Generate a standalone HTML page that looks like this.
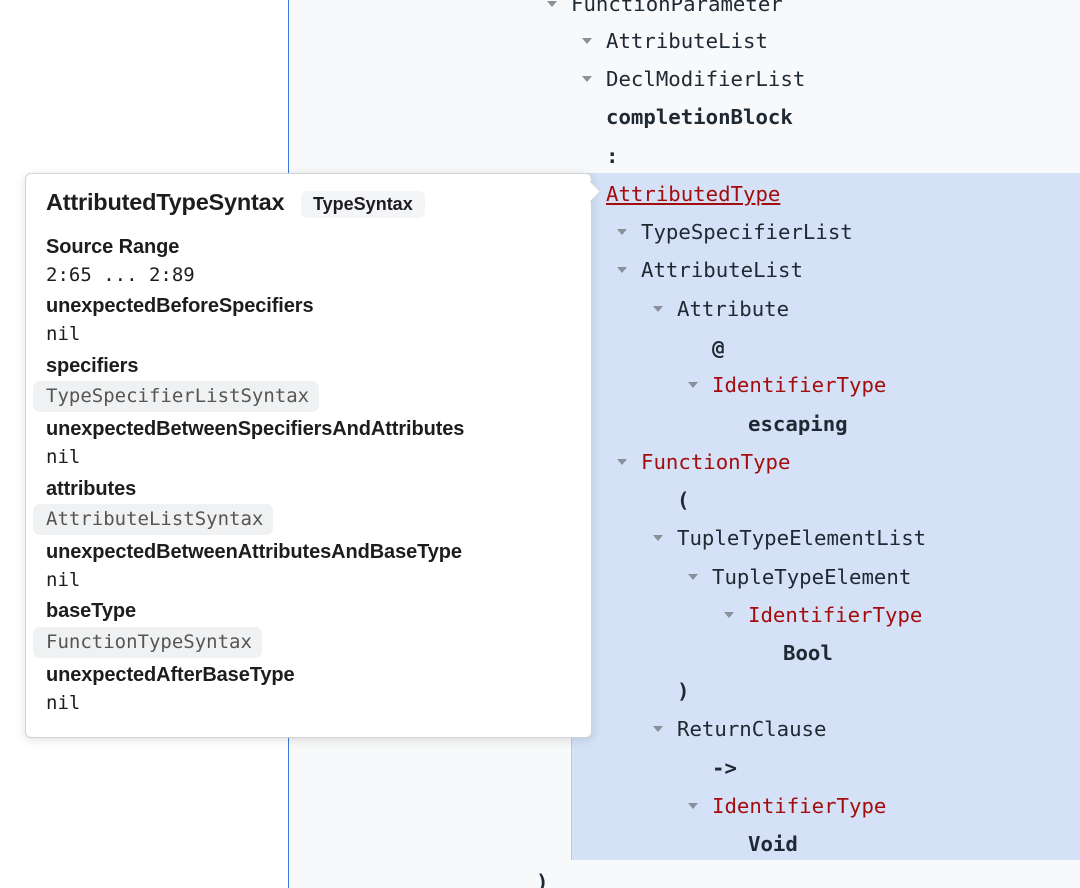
<!DOCTYPE html>
<html><head><meta charset="utf-8"><style>
html,body{margin:0;padding:0;width:1080px;height:888px;overflow:hidden;background:#fff;position:relative;font-family:"Liberation Sans",sans-serif;}
.panel{position:absolute;left:288px;top:0;width:792px;height:888px;background:#f8f9fa;border-left:1.5px solid #3a78d8;}
.hl{position:absolute;left:571px;top:173px;width:509px;height:687px;background:#d4e1f6;border-left:1px solid #b9c9e4;}
.row{position:absolute;font-family:"DejaVu Sans Mono","Liberation Mono",monospace;font-size:20.7px;color:#1f2933;line-height:24px;white-space:nowrap;}
.b{font-weight:bold;}
.r{color:#a30d0d;}
.tri{position:absolute;width:0;height:0;border-left:5px solid transparent;border-right:5px solid transparent;border-top:6px solid #8a9099;}
.pop{position:absolute;left:25px;top:173px;width:565px;height:563px;background:#fff;border:1px solid #cfd2d6;border-radius:6px;box-shadow:0 2px 10px rgba(0,0,0,0.12);}
.arrow{position:absolute;left:583px;top:184px;width:14px;height:14px;background:#fff;transform:rotate(45deg);border-top:1px solid #cfd2d6;border-right:1px solid #cfd2d6;}
.t{position:absolute;color:#1d1d1f;white-space:nowrap;}
.lbl{font-weight:bold;font-size:20px;letter-spacing:-0.1px;}
.val{font-family:"DejaVu Sans Mono","Liberation Mono",monospace;font-size:19px;}
.pill{position:absolute;left:33px;height:31px;background:#f0f1f2;border-radius:7px;font-family:"DejaVu Sans Mono","Liberation Mono",monospace;font-size:19px;color:#555;line-height:31px;padding-left:13px;box-sizing:border-box;}
</style></head><body>
<div class="panel"></div>
<div class="hl"></div>

<div class="tri" style="left:547px;top:1px"></div><div class="row" style="left:571px;top:-8px">FunctionParameter</div>
<div class="tri" style="left:582px;top:38px"></div><div class="row" style="left:606px;top:29px">AttributeList</div>
<div class="tri" style="left:582px;top:76px"></div><div class="row" style="left:606px;top:67px">DeclModifierList</div>
<div class="row b" style="left:606px;top:105px">completionBlock</div>
<div class="row b" style="left:606px;top:144px">:</div>
<div class="row r" style="left:606px;top:182px;text-decoration:underline">AttributedType</div>
<div class="tri" style="left:617px;top:229px"></div><div class="row" style="left:641px;top:220px">TypeSpecifierList</div>
<div class="tri" style="left:617px;top:267px"></div><div class="row" style="left:641px;top:258px">AttributeList</div>
<div class="tri" style="left:653px;top:306px"></div><div class="row" style="left:677px;top:297px">Attribute</div>
<div class="row b" style="left:712px;top:336px">@</div>
<div class="tri" style="left:688px;top:382px"></div><div class="row r" style="left:712px;top:373px">IdentifierType</div>
<div class="row b" style="left:748px;top:412px">escaping</div>
<div class="tri" style="left:617px;top:459px"></div><div class="row r" style="left:641px;top:450px">FunctionType</div>
<div class="row b" style="left:677px;top:488px">(</div>
<div class="tri" style="left:653px;top:535px"></div><div class="row" style="left:677px;top:526px">TupleTypeElementList</div>
<div class="tri" style="left:688px;top:574px"></div><div class="row" style="left:712px;top:565px">TupleTypeElement</div>
<div class="tri" style="left:724px;top:612px"></div><div class="row r" style="left:748px;top:603px">IdentifierType</div>
<div class="row b" style="left:783px;top:641px">Bool</div>
<div class="row b" style="left:677px;top:679px">)</div>
<div class="tri" style="left:653px;top:726px"></div><div class="row" style="left:677px;top:717px">ReturnClause</div>
<div class="row b" style="left:712px;top:756px">-&gt;</div>
<div class="tri" style="left:688px;top:803px"></div><div class="row r" style="left:712px;top:794px">IdentifierType</div>
<div class="row b" style="left:748px;top:832px">Void</div>
<div class="row b" style="left:536px;top:870px">)</div>

<div class="pop"></div>
<div class="arrow"></div>
<div class="t" style="left:46px;top:189px;font-weight:bold;font-size:23.5px;letter-spacing:-0.2px;">AttributedTypeSyntax</div>
<div class="t" style="left:301px;top:191px;height:27px;width:124px;background:#f4f5f6;border-radius:6px;"></div>
<div class="t" style="left:313px;top:194px;font-weight:bold;font-size:18px;">TypeSyntax</div>

<div class="t lbl" style="left:46px;top:236px">Source Range</div>
<div class="t val" style="left:46px;top:264px">2:65 ... 2:89</div>
<div class="t lbl" style="left:46px;top:295px">unexpectedBeforeSpecifiers</div>
<div class="t val" style="left:46px;top:323px">nil</div>
<div class="t lbl" style="left:46px;top:355px">specifiers</div>
<div class="pill" style="top:381px;width:286px">TypeSpecifierListSyntax</div>
<div class="t lbl" style="left:46px;top:418px">unexpectedBetweenSpecifiersAndAttributes</div>
<div class="t val" style="left:46px;top:446px">nil</div>
<div class="t lbl" style="left:46px;top:478px">attributes</div>
<div class="pill" style="top:504px;width:240px">AttributeListSyntax</div>
<div class="t lbl" style="left:46px;top:541px">unexpectedBetweenAttributesAndBaseType</div>
<div class="t val" style="left:46px;top:569px">nil</div>
<div class="t lbl" style="left:46px;top:600px">baseType</div>
<div class="pill" style="top:627px;width:229px">FunctionTypeSyntax</div>
<div class="t lbl" style="left:46px;top:664px">unexpectedAfterBaseType</div>
<div class="t val" style="left:46px;top:692px">nil</div>
</body></html>
